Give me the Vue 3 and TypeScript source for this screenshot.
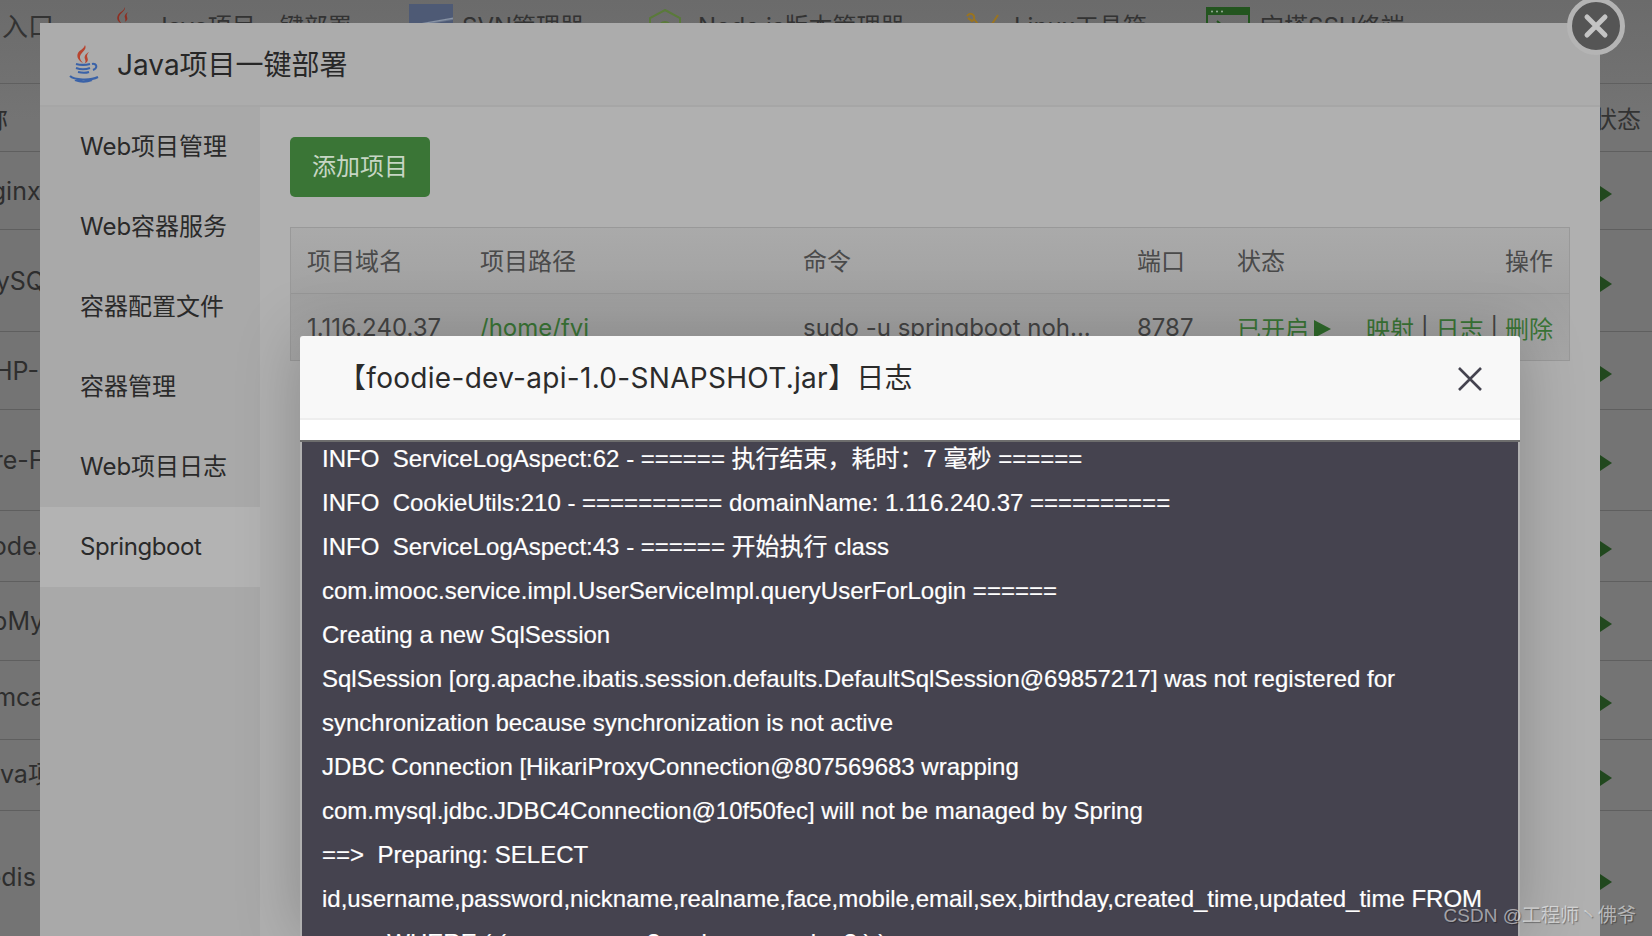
<script setup lang="ts">
const menu = ['Web项目管理', 'Web容器服务', '容器配置文件', '容器管理', 'Web项目日志', 'Springboot']
const logs = [
  'INFO  ServiceLogAspect:62 - ====== 执行结束，耗时：7 毫秒 ======',
  'INFO  CookieUtils:210 - ========== domainName: 1.116.240.37 ==========',
  'INFO  ServiceLogAspect:43 - ====== 开始执行 class',
  'com.imooc.service.impl.UserServiceImpl.queryUserForLogin ======',
  'Creating a new SqlSession',
  'SqlSession [org.apache.ibatis.session.defaults.DefaultSqlSession@69857217] was not registered for',
  'synchronization because synchronization is not active',
  'JDBC Connection [HikariProxyConnection@807569683 wrapping',
  'com.mysql.jdbc.JDBC4Connection@10f50fec] will not be managed by Spring',
  '==>  Preparing: SELECT',
  'id,username,password,nickname,realname,face,mobile,email,sex,birthday,created_time,updated_time FROM',
  'users WHERE ( ( username = ? and password = ? ) )',
]
const bgRows = [
  { h: 68, l: '名称', x: -42, y: 0, r: '状态', arrow: false },
  { h: 78, l: 'nginx', x: -24, y: 0, r: '', arrow: true },
  { h: 102, l: 'MySQL', x: -27, y: 0, r: '', arrow: true },
  { h: 78, l: 'PHP-5.6', x: -22, y: 0, r: '', arrow: true },
  { h: 101, l: 'Pure-Ftpd', x: -37, y: 0, r: '', arrow: true },
  { h: 71, l: 'Node.js', x: -27, y: 0, r: '', arrow: true },
  { h: 79, l: 'phpMyAdmin', x: -38, y: 0, r: '', arrow: true },
  { h: 79, l: 'Tomcat', x: -35, y: 3, r: '', arrow: true },
  { h: 71, l: 'Java项目', x: -28, y: 3, r: '', arrow: true },
  { h: 136, l: 'Redis', x: -29, y: 2, r: '', arrow: true },
]
</script>

<template>
  <div class="page">
    <div class="backdrop">
      <div class="tabs">
        <span class="tab first">入口</span>
        <span class="tab t-java">
          <svg class="tab-icon" width="14" height="18" viewBox="0 0 14 18"><path d="M9 0C10 4 3 6 3 11c0 2 1 4 3 6C2 15 0 12 2 8c1.500-3 6-4 7-8z" fill="#8e2f22"/><path d="M12 5c-3 2-4 4-3 6 .6 1.500.5 3-.5 4 2.500-1 3.500-3 2.500-5-.6-1.500-.3-3.500 1-5z" fill="#8e2f22"/></svg>
          Java项目一键部署
        </span>
        <span class="tab t-svn"><span class="svn"></span>SVN管理器</span>
        <span class="tab t-node">
          <svg class="tab-icon" width="34" height="36" viewBox="0 0 34 36"><path d="M17 1 32 9v18L17 35 2 27V9z" fill="none" stroke="#5a7a3a" stroke-width="2"/><circle cx="17" cy="19" r="6" fill="none" stroke="#5a7a3a" stroke-width="2"/></svg>
          Node.js版本管理器
        </span>
        <span class="tab t-tool">
          <svg class="tab-icon" width="36" height="30" viewBox="0 0 36 30"><path d="M2 4c3-4 8-2 7 3-.3 1-1 1.500-2 2L3 6M9 7l10 13M33 3 19 24" fill="none" stroke="#9a7420" stroke-width="2"/></svg>
          Linux工具箱
        </span>
        <span class="tab t-term">
          <svg class="tab-icon" width="44" height="36" viewBox="0 0 44 36"><rect x="1" y="1" width="42" height="34" fill="none" stroke="#23551f" stroke-width="2"/><rect x="1" y="1" width="42" height="7" fill="#23551f"/><circle cx="6" cy="4.500" r="1" fill="#9ab09a"/><circle cx="11" cy="4.500" r="1" fill="#9ab09a"/><circle cx="16" cy="4.500" r="1" fill="#9ab09a"/><path d="M11 14l6 5-6 5" fill="none" stroke="#23551f" stroke-width="2"/></svg>
          宝塔SSH终端
        </span>
      </div>
      <div v-for="(r, i) in bgRows" :key="i" class="bg-row" :style="{ height: r.h + 'px' }">
        <span :style="{ marginLeft: r.x + 'px', marginBottom: r.y * 2 + 'px' }">{{ r.l }}</span>
        <span v-if="r.r" class="bg-status">{{ r.r }}</span>
        <span v-if="r.arrow" class="bg-arrow"></span>
      </div>
    </div>

    <div class="outer">
      <div class="outer-head">
        <svg class="java" width="32" height="40" viewBox="0 0 32 40">
          <path d="M17 1c3 5-6 8-5 13 .4 2 1.500 3.500 3 5-4-2-7-6-5-10 1.500-3 6-4 7-8z" fill="#b8442f"/>
          <path d="M21 8c-4 2-5 5-4 7 .6 1.500 1 3-.5 4.500 3-1 4-3 3-5.500-.8-2-.5-4 1.500-6z" fill="#b8442f"/>
          <path d="M8 20c4 1 10 1 14 0M8 24c4 1.500 10 1.500 14 0M10 28c4 1 8 1 11 0M2 32c4 4 20 5 28 1M7 36c5 2 12 2 17 0M24 20c5-1 6 4 1 6" fill="none" stroke="#3a62a8" stroke-width="2"/>
        </svg>
        <span class="outer-title">Java项目一键部署</span>
      </div>
      <div class="outer-body">
        <ul class="side">
          <li v-for="(m, i) in menu" :key="m" :class="{ on: i === 5 }">{{ m }}</li>
        </ul>
        <div class="main">
          <button class="add">添加项目</button>
          <div class="table">
            <div class="tr th">
              <span class="c1">项目域名</span><span class="c2">项目路径</span><span class="c3">命令</span><span class="c4">端口</span><span class="c5">状态</span><span class="c6">操作</span>
            </div>
            <div class="tr td">
              <span class="c1">1.116.240.37</span><span class="c2 green">/home/fyj</span><span class="c3">sudo -u springboot noh...</span><span class="c4">8787</span>
              <span class="c5 green">已开启<i class="play"></i></span>
              <span class="c6"><b>映射</b> | <b>日志</b> | <b>删除</b></span>
            </div>
          </div>
        </div>
      </div>
      <div class="big-close">
        <svg width="28" height="28" viewBox="0 0 28 28"><path d="M5 5 23 23M23 5 5 23" stroke="#c4c4c4" stroke-width="5" stroke-linecap="round"/></svg>
      </div>
    </div>

    <div class="log">
      <div class="log-head">
        <span class="log-title">【foodie-dev-api-1.0-SNAPSHOT.jar】日志</span>
        <svg class="log-close" width="24" height="24" viewBox="0 0 24 24"><path d="M1 1 23 23M23 1 1 23" stroke="#44434f" stroke-width="2.600"/></svg>
      </div>
      <div class="log-gap"></div>
      <div class="log-body">
        <div class="log-lines">
          <div v-for="(l, i) in logs" :key="i" class="line">{{ l }}</div>
        </div>
      </div>
    </div>
    <div class="mark">CSDN @工程师丶佛爷</div>
  </div>
</template>

<style>
html, body { margin: 0; overflow: hidden; }
</style>

<style scoped>
.page {
  position: relative;
  width: 1652px;
  height: 936px;
  overflow: hidden;
  background: linear-gradient(#6b6b6b, #747474 120px);
  font-family: "Inter", "Noto Sans CJK SC", sans-serif;
  color: #2f2f2f;
}
.tabs { display: flex; height: 84px; border-bottom: 1px solid #5f5f5f; box-sizing: border-box; }
.tab { position: absolute; top: 9px; font-size: 24px; line-height: 36px; white-space: nowrap; display: flex; align-items: center; color: #333; }
.first { left: 2px; top: 9px; font-size: 26px; }
.t-java { left: 116px; gap: 24px; }
.t-java .tab-icon { margin-top: -22px; }
.t-svn { left: 409px; gap: 9px; }
.t-node { left: 648px; gap: 16px; }
.t-tool { left: 965px; gap: 13px; }
.t-term { left: 1206px; gap: 10px; }
.tab-icon { flex: none; }
.svn { display: block; width: 44px; height: 30px; background: linear-gradient(170deg, #4e5a75 55%, #8c97a8 58%, #4e5a75 64%); margin-top: -16px; }
.t-term .tab-icon { margin-top: -4px; }
.bg-row { position: relative; box-sizing: border-box; border-bottom: 1px solid #5f5f5f; font-size: 25px; display: flex; align-items: center; color: #2e2e2e; white-space: nowrap; }
.bg-status { position: absolute; left: 1593px; color: #333; font-size: 24px; }
.bg-arrow { position: absolute; left: 1600px; top: 50%; margin-top: -5px; border-left: 12px solid #21481e; border-top: 8px solid transparent; border-bottom: 8px solid transparent; }

.outer {
  position: absolute;
  left: 40px;
  top: 23px;
  width: 1560px;
  height: 913px;
  background: #b0b0b0;
  display: flex;
  flex-direction: column;
}
.outer-head {
  height: 82px;
  box-sizing: content-box;
  border-bottom: 2px solid #a6a6a6;
  background: #acacac;
  display: flex;
  align-items: center;
  padding-left: 28px;
  gap: 17px;
}
.outer-title { font-size: 28px; color: #272727; margin-bottom: 2px; }
.outer-body { flex: 1; display: flex; }
.side { list-style: none; margin: 0; padding: 0; width: 220px; background: #a9a9a9; }
.side li { height: 80px; line-height: 80px; padding-left: 40px; font-size: 24px; color: #2a2a2a; }
.side li.on { background: #b3b3b3; letter-spacing: -.4px; }
.main { flex: 1; padding: 30px; box-sizing: border-box; }
.add { display: block; width: 140px; height: 60px; background: #3a7536; border: 0; border-radius: 5px; color: #c6d6c4; font: inherit; font-size: 24px; padding: 0 0 6px; box-sizing: border-box; }
.table { margin-top: 30px; border: 1px solid #999; width: 1280px; box-sizing: border-box; }
.tr { display: flex; align-items: center; position: relative; font-size: 24px; color: #4a4a4a; box-sizing: border-box; }
.th { height: 66px; padding-bottom: 2px; background: linear-gradient(#aaa, #a2a2a2); border-bottom: 1px solid #969696; }
.td { height: 66px; background: linear-gradient(#a0a0a0, #a6a6a6); color: #444; }
.tr span { position: absolute; white-space: nowrap; }
.c1 { left: 16px; }
.c2 { left: 189px; }
.c3 { left: 512px; }
.c4 { left: 846px; }
.c5 { left: 946px; }
.c6 { right: 16px; }
.green, .c6 b { color: #3a7536; font-weight: 400; }
.play { display: inline-block; border-left: 17px solid #2f6a2b; border-top: 9px solid transparent; border-bottom: 9px solid transparent; margin-left: 5px; }
.big-close {
  position: absolute;
  left: 1527px;
  top: -26px;
  width: 48px;
  height: 48px;
  background: #555;
  border: 5px solid #b4b4b4;
  border-radius: 50%;
  display: flex;
  align-items: center;
  justify-content: center;
}

.log {
  position: absolute;
  left: 300px;
  top: 336px;
  width: 1220px;
  box-shadow: 0 0 60px rgba(0, 0, 0, .22);
}
.log-head {
  height: 82px;
  background: #f8f8f8;
  border-bottom: 2px solid #eee;
  border-radius: 3px 3px 0 0;
  display: flex;
  align-items: center;
  justify-content: space-between;
  padding: 0 38px 0 38px;
}
.log-title { font-size: 28px; letter-spacing: .3px; color: #2b2b2b; margin-bottom: 2px; }
.log-close { margin-top: 3px; }
.log-gap { height: 20px; background: #fff; border-bottom: 2px solid #6d6d6d; }
.log-body {
  margin: 0 2px;
  background: #45434f;
  padding: 0 20px;
  height: 494px;
  overflow: hidden;
  font-family: "Liberation Sans", "Noto Sans CJK SC", sans-serif;
  font-size: 24px;
  line-height: 44px;
  color: #fff;
  white-space: pre;
  -webkit-text-stroke: .2px #fff;
}
.log-lines { margin-top: -5px; }
.mark {
  position: absolute;
  right: 16px;
  bottom: 9px;
  font-family: "Liberation Sans", "Noto Sans CJK SC", sans-serif;
  font-size: 19px;
  color: rgba(255, 255, 255, .55);
  text-shadow: 1px 1px 1px rgba(0, 0, 0, .35);
}
</style>
